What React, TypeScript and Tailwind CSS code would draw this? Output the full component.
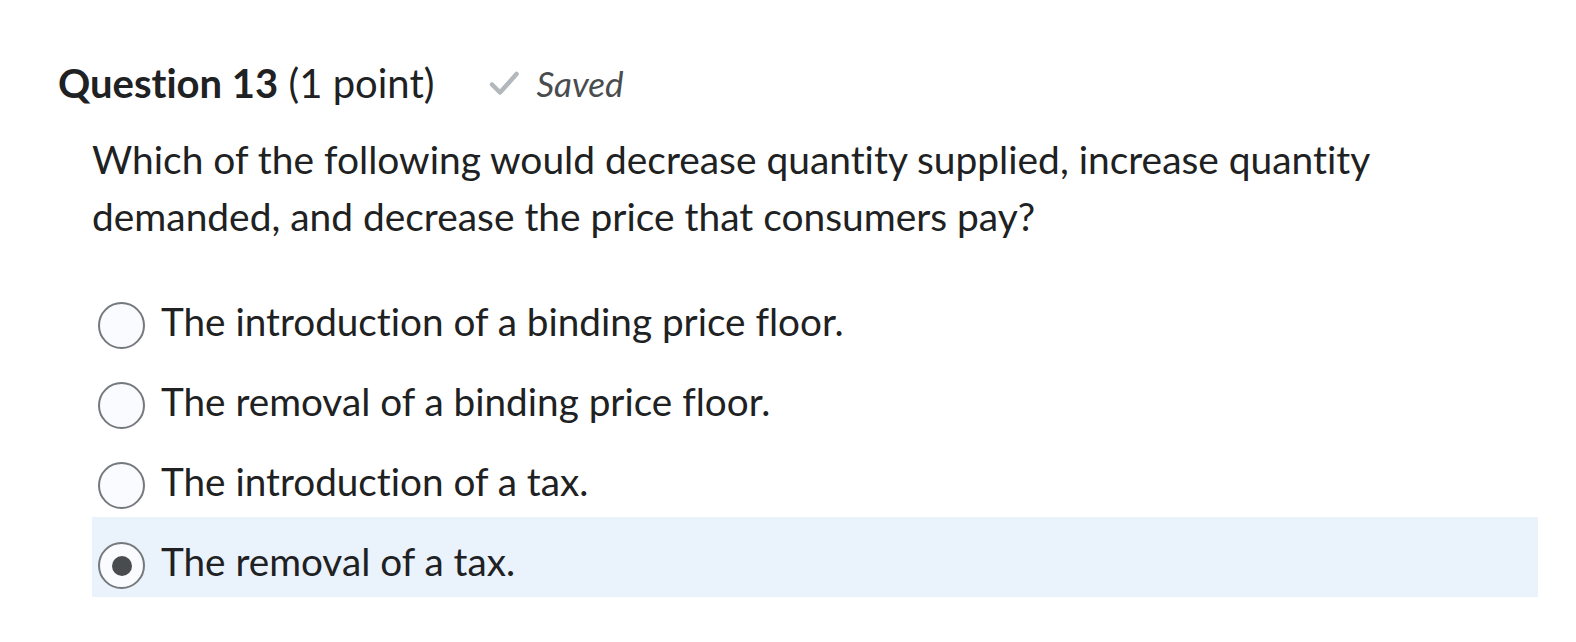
import { useState } from "react";

const options = [
  "The introduction of a binding price floor.",
  "The removal of a binding price floor.",
  "The introduction of a tax.",
  "The removal of a tax.",
];

export default function App() {
  const [selected, setSelected] = useState(3);

  return (
    <div
      className="min-h-[642px] w-[1576px] bg-white text-[#202122] [font-variant-ligatures:none]"
      style={{ fontFamily: "Lato, 'Noto Sans', sans-serif" }}
    >
      <div className="pl-[58px] pt-[58px]">
        <div className="flex h-[50px] items-center">
          <h2 className="text-[40px] leading-none">
            <span className="font-bold">Question 13</span>{" "}
            <span>(1 point)</span>
          </h2>
          <div className="ml-[54px] flex items-center gap-[16px] text-[#494c4e]">
            <svg width="32" height="26" viewBox="0 0 32 26" fill="none">
              <path
                d="M4 14.5l8 8L28.5 4"
                stroke="#b3b8bc"
                strokeWidth="4.5"
                strokeLinecap="round"
                strokeLinejoin="round"
              />
            </svg>
            <span className="text-[35px] italic leading-none">Saved</span>
          </div>
        </div>

        <div className="pl-[34px] pr-[38px]">
          <p className="mt-[23px] text-[38.9px] leading-[57px]">
            Which of the following would decrease quantity supplied, increase quantity
            <br />
            demanded, and decrease the price that consumers pay?
          </p>

          <ul className="mt-[32px]">
            {options.map((o, i) => {
              const on = i === selected;
              return (
                <li
                  key={o}
                  onClick={() => setSelected(i)}
                  className={
                    on
                      ? "flex h-[80px] cursor-pointer items-center gap-[16px] bg-[#eaf2fc] pl-[6px]"
                      : "flex h-[80px] cursor-pointer items-center gap-[16px] pl-[6px]"
                  }
                >
                  <span className="mt-[17px] flex h-[47px] w-[47px] shrink-0 items-center justify-center rounded-full border-2 border-[#74797d] bg-[#f9fbff]">
                    {on && <span className="h-[20px] w-[20px] rounded-full bg-[#494c4e]" />}
                  </span>
                  <span className="mt-[8px] text-[38.7px] leading-none">{o}</span>
                </li>
              );
            })}
          </ul>
        </div>
      </div>
    </div>
  );
}
